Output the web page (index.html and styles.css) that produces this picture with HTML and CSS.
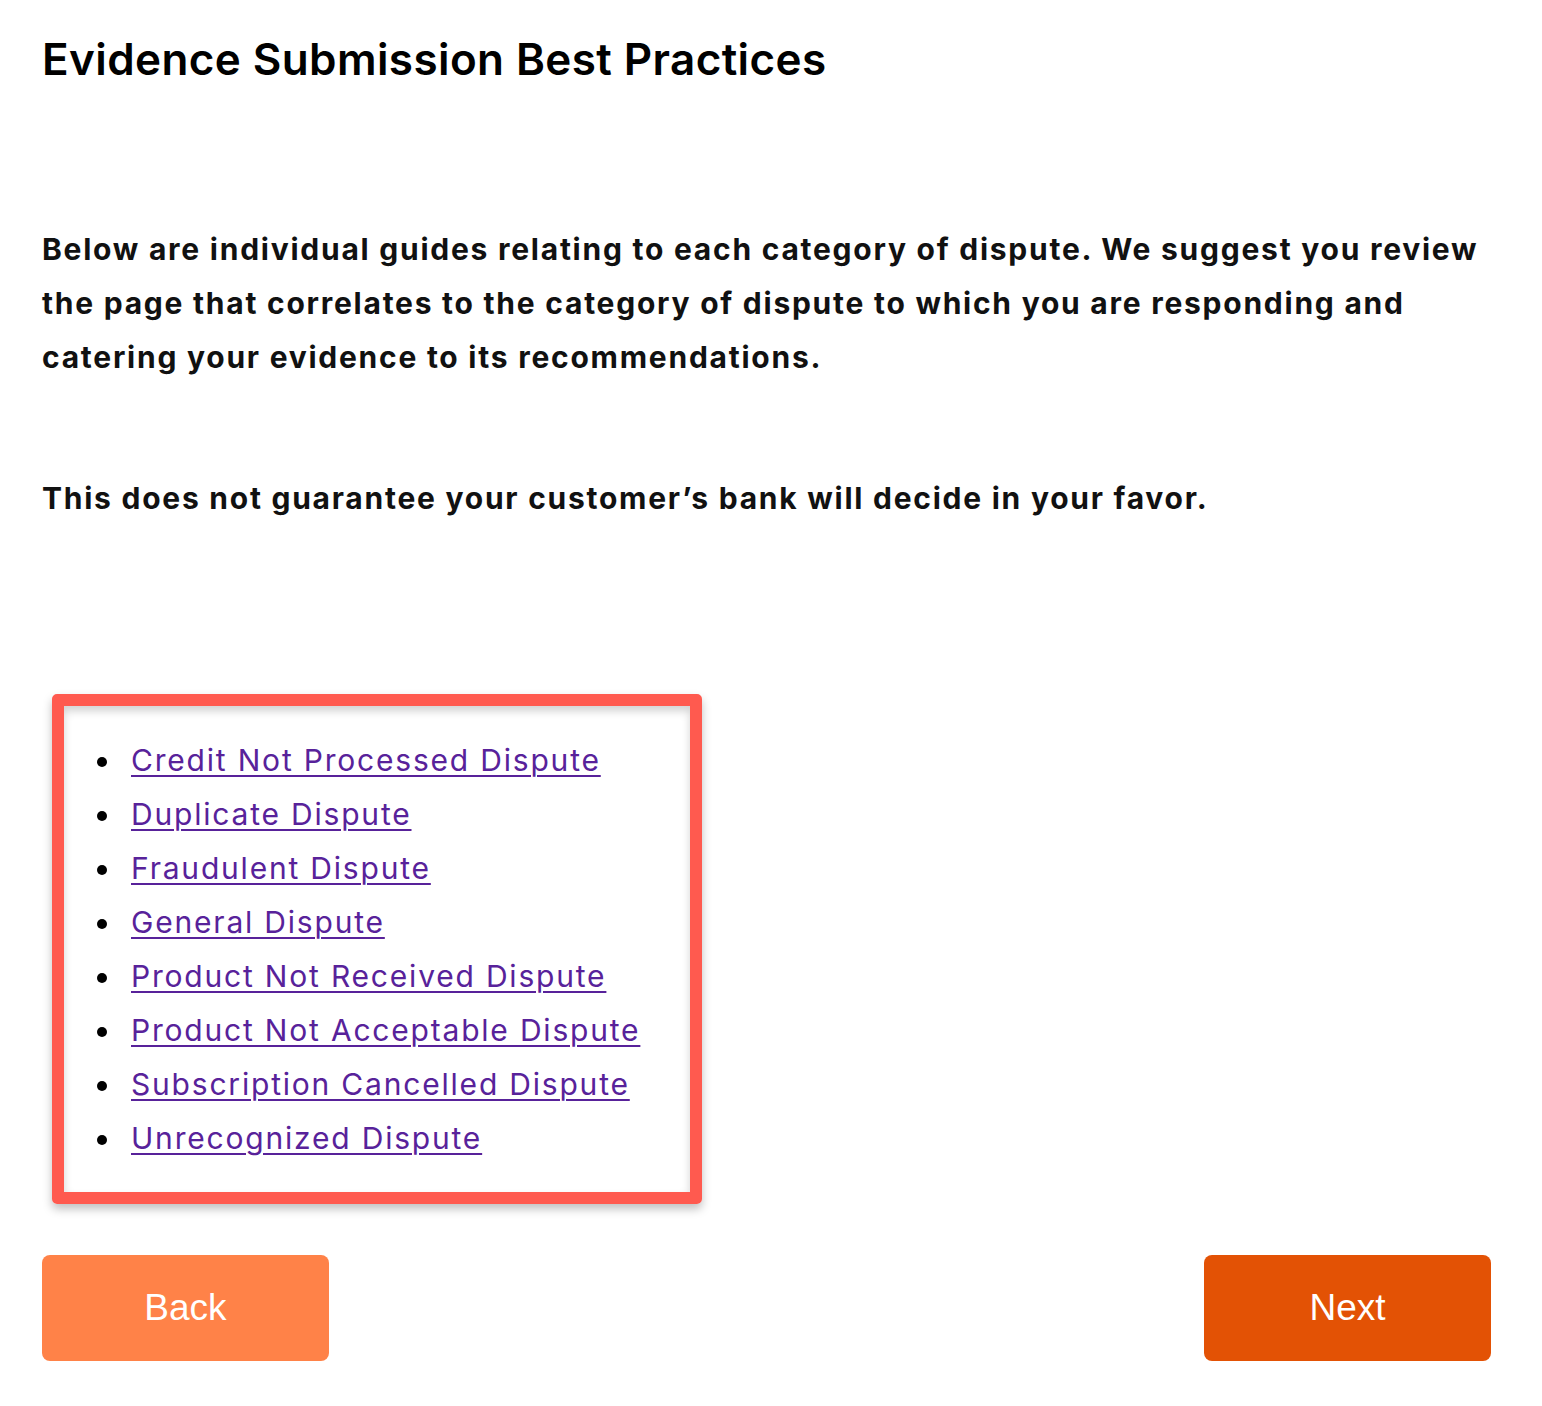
FILE: index.html
```html
<!DOCTYPE html>
<html lang="en">
<head>
<meta charset="utf-8">
<title>Evidence Submission Best Practices</title>
<link rel="stylesheet" href="styles.css">
</head>
<body>
<main class="page">
  <h1 class="title">Evidence Submission Best Practices</h1>
  <p class="intro">Below are individual guides relating to each category of dispute. We suggest you review the page that correlates to the category of dispute to which you are responding and catering your evidence to its recommendations.</p>
  <p class="note">This does not guarantee your customer’s bank will decide in your favor.</p>
  <div class="guides">
    <ul class="guide-list">
      <li><a href="#">Credit Not Processed Dispute</a></li>
      <li><a href="#">Duplicate Dispute</a></li>
      <li><a href="#">Fraudulent Dispute</a></li>
      <li><a href="#">General Dispute</a></li>
      <li><a href="#">Product Not Received Dispute</a></li>
      <li><a href="#">Product Not Acceptable Dispute</a></li>
      <li><a href="#">Subscription Cancelled Dispute</a></li>
      <li><a href="#">Unrecognized Dispute</a></li>
    </ul>
  </div>
  <div class="actions">
    <button class="btn btn-back" type="button">Back</button>
    <button class="btn btn-next" type="button">Next</button>
  </div>
</main>
</body>
</html>
```
FILE: styles.css
```css
html, body {
  margin: 0;
  padding: 0;
  background: #fff;
}
body {
  font-family: Inter, "Noto Sans", sans-serif;
  color: #111;
}
.page {
  padding: 29px 51px 40px 42px;
}
.title {
  margin: 0;
  font-family: Inter, sans-serif;
  font-weight: 600;
  font-size: 44px;
  line-height: 60px;
  letter-spacing: 0.4px;
  color: #000;
}
.intro,
.note {
  font-size: 30px;
  font-weight: 700;
  line-height: 54px;
  letter-spacing: 1.75px;
}
.intro {
  margin: 133px 0 0;
}
.note {
  margin: 87px 0 0;
}
.guides {
  margin: 169px 0 0 10px;
  width: 650px;
  box-sizing: border-box;
  border: 12px solid #ff5a4f;
  border-radius: 5px;
  padding: 27px;
  box-shadow: 0 5px 10px rgba(0,0,0,0.25), inset 0 5px 8px rgba(0,0,0,0.18);
}
.guide-list {
  margin: 0;
  padding-left: 32px;
  font-size: 30px;
  line-height: 54px;
}
.guide-list li {
  padding-left: 8px;
}
.guide-list li::marker {
  color: #000;
}
.guide-list a {
  color: #58229a;
  letter-spacing: 1.8px;
  text-decoration: underline;
  text-underline-offset: 4px;
  text-decoration-thickness: 2px;
}
.actions {
  margin-top: 51px;
  display: flex;
  justify-content: space-between;
}
.btn {
  width: 287px;
  height: 106px;
  border: none;
  border-radius: 8px;
  font-family: "Liberation Sans", Arial, sans-serif;
  font-size: 37px;
  color: #fff;
  cursor: pointer;
}
.btn-back {
  background: #ff8248;
}
.btn-next {
  background: #e35205;
}
```
